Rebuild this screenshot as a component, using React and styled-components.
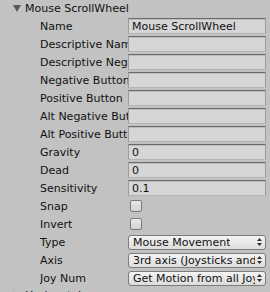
import styled, { createGlobalStyle } from 'styled-components'

const Global = createGlobalStyle`
  body {
    margin: 0;
    background: #c2c2c2;
    font-family: "DejaVu Sans", Verdana, sans-serif;
    font-size: 11px;
    color: #111;
  }
`

const Panel = styled.div`
  width: 270px;
  height: 292px;
  overflow: hidden;
  background: #c2c2c2;
`

const Header = styled.div`
  display: flex;
  align-items: center;
  height: 17px;
  padding-left: 13px;
  gap: 4px;
  white-space: nowrap;
`

const Arrow = styled.span`
  width: 0;
  height: 0;
  border-left: 4px solid transparent;
  border-right: 4px solid transparent;
  border-top: 7px solid ${(p) => (p.$faded ? '#8a8a8a' : '#585858')};
  transform: ${(p) => (p.$closed ? 'rotate(-90deg)' : 'none')};
`

const Row = styled.div`
  display: flex;
  align-items: center;
  height: 18px;
  padding-left: 40px;
`

const Label = styled.div`
  width: 88px;
  flex: none;
  overflow: hidden;
  white-space: nowrap;
`

const Field = styled.div`
  box-sizing: border-box;
  width: 138px;
  height: 16px;
  padding: 0 3px;
  display: flex;
  align-items: center;
  background: #d6d6d6;
  border: 1px solid #9c9c9c;
  border-top-color: #6a6a6a;
  border-bottom-color: #b4b4b4;
  box-shadow: inset 0 1px 0 #bdbdbd;
  white-space: nowrap;
  overflow: hidden;
`

const Check = styled.div`
  box-sizing: border-box;
  width: 12px;
  height: 12px;
  margin-left: 2px;
  border: 1px solid #7a7a7a;
  border-radius: 2px;
  background: linear-gradient(#e8e8e8, #d2d2d2);
`

const Select = styled.div`
  box-sizing: border-box;
  width: 138px;
  height: 15px;
  padding: 0 3px 0 4px;
  display: flex;
  align-items: center;
  justify-content: space-between;
  border: 1px solid #7c7c7c;
  border-radius: 3px;
  background: linear-gradient(#f4f4f4, #dcdcdc);
  white-space: nowrap;
  overflow: hidden;
`

const SelectText = styled.span`
  overflow: hidden;
`

const Updown = styled.svg`
  flex: none;
  margin-left: 2px;
`

const UpDownIcon = () => (
  <Updown width="5" height="8" viewBox="0 0 5 8">
    <path d="M2.5 0 L5 3 H0 Z M0 5 H5 L2.5 8 Z" fill="#333" />
  </Updown>
)

const textRows = [
  ['Name', 'Mouse ScrollWheel'],
  ['Descriptive Name', ''],
  ['Descriptive Negative Name', ''],
  ['Negative Button', ''],
  ['Positive Button', ''],
  ['Alt Negative Button', ''],
  ['Alt Positive Button', ''],
  ['Gravity', '0'],
  ['Dead', '0'],
  ['Sensitivity', '0.1'],
]

const selects = [
  ['Type', 'Mouse Movement'],
  ['Axis', '3rd axis (Joysticks and Scrollwheel)'],
  ['Joy Num', 'Get Motion from all Joysticks'],
]

const App = () => (
  <Panel>
    <Global />
    <Header>
      <Arrow />
      <span>Mouse ScrollWheel</span>
    </Header>
    {textRows.map(([label, value]) => (
      <Row key={label}>
        <Label>{label}</Label>
        <Field>{value}</Field>
      </Row>
    ))}
    {['Snap', 'Invert'].map((label) => (
      <Row key={label}>
        <Label>{label}</Label>
        <Check />
      </Row>
    ))}
    {selects.map(([label, value]) => (
      <Row key={label}>
        <Label>{label}</Label>
        <Select>
          <SelectText>{value}</SelectText>
          <UpDownIcon />
        </Select>
      </Row>
    ))}
    <Header>
      <Arrow $closed $faded />
      <span>Horizontal</span>
    </Header>
  </Panel>
)

export default App
